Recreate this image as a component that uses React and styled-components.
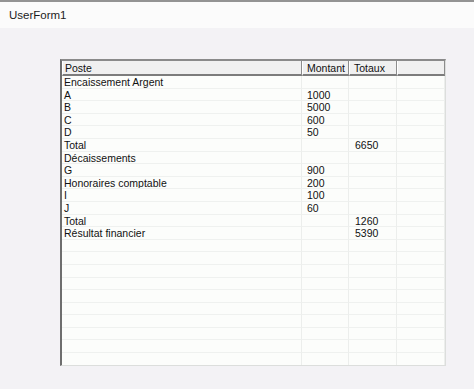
import React from "react";
import styled, { createGlobalStyle } from "styled-components";

const Global = createGlobalStyle`
  html, body { margin: 0; padding: 0; background: #f3f2f5; }
  body { font-family: "Liberation Sans", Arial, sans-serif; }
`;

const Window = styled.div`
  width: 474px;
  height: 389px;
  display: flex;
  flex-direction: column;
  overflow: hidden;
  border-top: 2px solid #939393;
  box-sizing: border-box;
`;

const TitleBar = styled.div`
  height: 26px;
  flex: none;
  background: #fbfbfb;
  display: flex;
  align-items: center;
  padding-left: 9px;
  font-size: 11.5px;
  color: #1c1c1c;
`;

const Client = styled.div`
  flex: 1;
  background: #f3f2f5;
  padding: 31px 0 0 60px;
`;

const Frame = styled.div`
  width: 386px;
  height: 307px;
  border-left: 2px solid #6e6e6e;
  border-top: 2px solid #8a8a8a;
  border-right: 1px solid #dcdedc;
  border-bottom: 1px solid #dcdedc;
  background: #fcfdfb;
  overflow: hidden;
  box-sizing: border-box;
`;

const Grid = styled.div`
  display: grid;
  grid-template-columns: 240px 47px 48px 48px;
  grid-auto-rows: 12.6px;
  grid-template-rows: 15px;
  color: #111;
`;

const Head = styled.div`
  background: #f0f0f0;
  border-bottom: 2px solid #7c7c7c;
  border-right: 1px solid #8c8c8c;
  border-left: 1px solid #ffffff;
  padding-left: ${(p) => p.$pad || 3}px;
  line-height: 14px;
  font-size: 10.5px;
  white-space: nowrap;
  overflow: hidden;
`;

const Cell = styled.div`
  border-right: 1px solid #eceeec;
  border-bottom: 1px solid #eff1ef;
  padding-left: ${(p) => p.$pad || 3}px;
  line-height: 12.5px;
  font-size: 10.5px;
  white-space: nowrap;
  overflow: hidden;
  box-sizing: border-box;
`;

const rows = [
  ["Encaissement Argent", "", ""],
  ["A", "1000", ""],
  ["B", "5000", ""],
  ["C", "600", ""],
  ["D", "50", ""],
  ["Total", "", "6650"],
  ["Décaissements", "", ""],
  ["G", "900", ""],
  ["Honoraires comptable", "200", ""],
  ["I", "100", ""],
  ["J", "60", ""],
  ["Total", "", "1260"],
  ["Résultat financier", "", "5390"],
];
while (rows.length < 24) rows.push(["", "", ""]);

export default function App() {
  return (
    <>
      <Global />
      <Window>
        <TitleBar>UserForm1</TitleBar>
        <Client>
          <Frame>
            <Grid>
              <Head $pad={2}>Poste</Head>
              <Head $pad={4}>Montant</Head>
              <Head $pad={4}>Totaux</Head>
              <Head />
              {rows.map((r, i) => (
                <React.Fragment key={i}>
                  <Cell $pad={2}>{r[0]}</Cell>
                  <Cell $pad={5}>{r[1]}</Cell>
                  <Cell $pad={6}>{r[2]}</Cell>
                  <Cell />
                </React.Fragment>
              ))}
            </Grid>
          </Frame>
        </Client>
      </Window>
    </>
  );
}
